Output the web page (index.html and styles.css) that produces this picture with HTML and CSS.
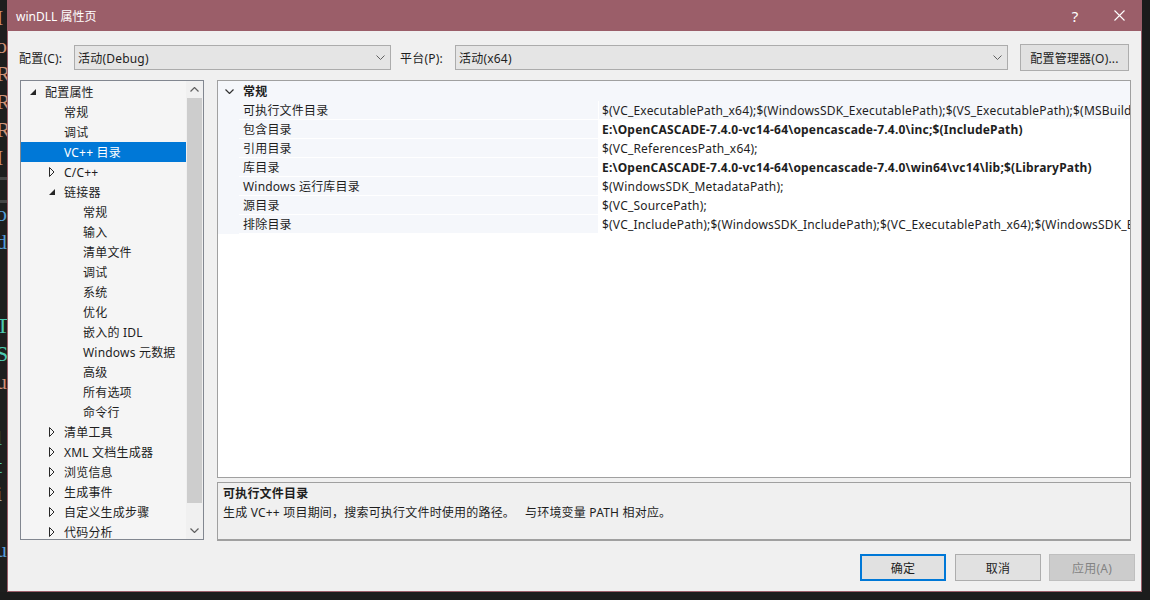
FILE: index.html
```html
<!DOCTYPE html>
<html lang="zh-CN">
<head>
    <meta charset="UTF-8">
    <title>winDLL 属性页</title>
    <link rel="stylesheet" href="styles.css">
</head>
<body>
    <div class="desktop">
        <!-- editor behind the dialog -->
        <div class="editor-strip">
            <div class="ln orange">I</div>
            <div class="ln orange">o</div>
            <div class="ln orange">R</div>
            <div class="ln orange">R</div>
            <div class="ln orange">R</div>
            <div class="ln orange">I</div>
            <div class="ln"></div>
            <div class="ln blue">o</div>
            <div class="ln blue">d</div>
            <div class="ln"></div>
            <div class="ln"></div>
            <div class="ln teal">T</div>
            <div class="ln teal">S</div>
            <div class="ln orange">u</div>
            <div class="ln"></div>
            <div class="ln teal">l</div>
            <div class="ln teal">t</div>
            <div class="ln grey">i</div>
            <div class="ln"></div>
            <div class="ln blue">u</div>
        </div>

        <div class="window">
            <div class="titlebar">
                <span class="title">winDLL 属性页</span>
                <span class="cap-btn help">?</span>
                <span class="cap-btn close">
                    <svg width="11" height="11" viewBox="0 0 11 11"><path d="M0.5 0.5 L10.5 10.5 M10.5 0.5 L0.5 10.5" stroke="#fff" stroke-width="1.1"/></svg>
                </span>
            </div>

            <div class="config-row">
                <span class="lbl">配置(C):</span>
                <div class="combo narrow">
                    <span>活动(Debug)</span>
                    <svg width="9" height="5" viewBox="0 0 9 5"><polyline points="0.5,0.5 4.5,4.5 8.5,0.5" fill="none" stroke="#606060"/></svg>
                </div>
                <span class="lbl platform">平台(P):</span>
                <div class="combo wide">
                    <span>活动(x64)</span>
                    <svg width="9" height="5" viewBox="0 0 9 5"><polyline points="0.5,0.5 4.5,4.5 8.5,0.5" fill="none" stroke="#606060"/></svg>
                </div>
                <button class="btn mgr-btn">配置管理器(O)...</button>
            </div>

            <div class="main">
                <div class="tree">
                    <div class="tree-list">
                        <div class="node lv0"><span class="arrow"><svg width="7" height="7" viewBox="0 0 7 7"><polygon points="6,0 6,6 0,6" fill="#262626"/></svg></span>配置属性</div>
                        <div class="node lv1"><span class="arrow"></span>常规</div>
                        <div class="node lv1"><span class="arrow"></span>调试</div>
                        <div class="node lv1 selected"><span class="arrow"></span>VC++ 目录</div>
                        <div class="node lv1"><span class="arrow"><svg width="6" height="10" viewBox="0 0 6 10"><polygon points="0.5,0.5 5,5 0.5,9.5" fill="none" stroke="#262626"/></svg></span>C/C++</div>
                        <div class="node lv1"><span class="arrow"><svg width="7" height="7" viewBox="0 0 7 7"><polygon points="6,0 6,6 0,6" fill="#262626"/></svg></span>链接器</div>
                        <div class="node lv2"><span class="arrow"></span>常规</div>
                        <div class="node lv2"><span class="arrow"></span>输入</div>
                        <div class="node lv2"><span class="arrow"></span>清单文件</div>
                        <div class="node lv2"><span class="arrow"></span>调试</div>
                        <div class="node lv2"><span class="arrow"></span>系统</div>
                        <div class="node lv2"><span class="arrow"></span>优化</div>
                        <div class="node lv2"><span class="arrow"></span>嵌入的 IDL</div>
                        <div class="node lv2"><span class="arrow"></span>Windows 元数据</div>
                        <div class="node lv2"><span class="arrow"></span>高级</div>
                        <div class="node lv2"><span class="arrow"></span>所有选项</div>
                        <div class="node lv2"><span class="arrow"></span>命令行</div>
                        <div class="node lv1"><span class="arrow"><svg width="6" height="10" viewBox="0 0 6 10"><polygon points="0.5,0.5 5,5 0.5,9.5" fill="none" stroke="#262626"/></svg></span>清单工具</div>
                        <div class="node lv1"><span class="arrow"><svg width="6" height="10" viewBox="0 0 6 10"><polygon points="0.5,0.5 5,5 0.5,9.5" fill="none" stroke="#262626"/></svg></span>XML 文档生成器</div>
                        <div class="node lv1"><span class="arrow"><svg width="6" height="10" viewBox="0 0 6 10"><polygon points="0.5,0.5 5,5 0.5,9.5" fill="none" stroke="#262626"/></svg></span>浏览信息</div>
                        <div class="node lv1"><span class="arrow"><svg width="6" height="10" viewBox="0 0 6 10"><polygon points="0.5,0.5 5,5 0.5,9.5" fill="none" stroke="#262626"/></svg></span>生成事件</div>
                        <div class="node lv1"><span class="arrow"><svg width="6" height="10" viewBox="0 0 6 10"><polygon points="0.5,0.5 5,5 0.5,9.5" fill="none" stroke="#262626"/></svg></span>自定义生成步骤</div>
                        <div class="node lv1"><span class="arrow"><svg width="6" height="10" viewBox="0 0 6 10"><polygon points="0.5,0.5 5,5 0.5,9.5" fill="none" stroke="#262626"/></svg></span>代码分析</div>
                    </div>
                    <div class="vscroll">
                        <div class="sc-arrow"><svg width="9" height="5" viewBox="0 0 9 5"><polyline points="0.5,4.5 4.5,0.5 8.5,4.5" fill="none" stroke="#606060" stroke-width="1.2"/></svg></div>
                        <div class="sc-track"><div class="sc-thumb"></div></div>
                        <div class="sc-arrow"><svg width="9" height="5" viewBox="0 0 9 5"><polyline points="0.5,0.5 4.5,4.5 8.5,0.5" fill="none" stroke="#606060" stroke-width="1.2"/></svg></div>
                    </div>
                </div>

                <div class="right">
                    <div class="grid">
                        <div class="cat-row">
                            <span class="gutter"><svg width="9" height="5" viewBox="0 0 9 5"><polyline points="0.5,0.5 4.5,4.5 8.5,0.5" fill="none" stroke="#333" stroke-width="1.2"/></svg></span>
                            <span class="cat-name">常规</span>
                        </div>
                        <div class="prop-row current">
                            <span class="gutter"></span>
                            <span class="name">可执行文件目录</span>
                            <span class="value">$(VC_ExecutablePath_x64);$(WindowsSDK_ExecutablePath);$(VS_ExecutablePath);$(MSBuild_ExecutablePath);$(FxCopDir);$(PATH);</span>
                        </div>
                        <div class="prop-row">
                            <span class="gutter"></span>
                            <span class="name">包含目录</span>
                            <span class="value bold">E:\OpenCASCADE-7.4.0-vc14-64\opencascade-7.4.0\inc;$(IncludePath)</span>
                        </div>
                        <div class="prop-row">
                            <span class="gutter"></span>
                            <span class="name">引用目录</span>
                            <span class="value">$(VC_ReferencesPath_x64);</span>
                        </div>
                        <div class="prop-row">
                            <span class="gutter"></span>
                            <span class="name">库目录</span>
                            <span class="value bold">E:\OpenCASCADE-7.4.0-vc14-64\opencascade-7.4.0\win64\vc14\lib;$(LibraryPath)</span>
                        </div>
                        <div class="prop-row">
                            <span class="gutter"></span>
                            <span class="name">Windows 运行库目录</span>
                            <span class="value">$(WindowsSDK_MetadataPath);</span>
                        </div>
                        <div class="prop-row">
                            <span class="gutter"></span>
                            <span class="name">源目录</span>
                            <span class="value">$(VC_SourcePath);</span>
                        </div>
                        <div class="prop-row">
                            <span class="gutter"></span>
                            <span class="name">排除目录</span>
                            <span class="value">$(VC_IncludePath);$(WindowsSDK_IncludePath);$(VC_ExecutablePath_x64);$(WindowsSDK_ExecutablePath);$(VS_ExecutablePath);</span>
                        </div>
                    </div>
                    <div class="desc">
                        <div class="desc-title">可执行文件目录</div>
                        <div class="desc-text">生成 VC++ 项目期间，搜索可执行文件时使用的路径。&nbsp;&nbsp; 与环境变量 PATH 相对应。</div>
                    </div>
                </div>
            </div>

            <div class="buttons">
                <button class="btn default">确定</button>
                <button class="btn">取消</button>
                <button class="btn disabled">应用(A)</button>
            </div>
        </div>
    </div>
</body>
</html>
```

FILE: styles.css
```css
* {
    box-sizing: border-box;
}
body {
    margin: 0;
    width: 1150px;
    height: 600px;
    overflow: hidden;
    background: #1c1c1c;
    font-family: "Noto Sans", "Noto Sans CJK SC", sans-serif;
    font-size: 12px;
    letter-spacing: 0.2px;
    color: #1e1e1e;
}
.desktop {
    display: flex;
    height: 592px;
}

/* editor window peeking out on the left */
.editor-strip {
    width: 7px;
    overflow: hidden;
    padding-top: 4px;
    font-family: "Liberation Serif", serif;
    font-size: 22px;
    letter-spacing: 0;
    background:
        linear-gradient(to bottom,
            transparent 177px, #454545 177px, #454545 180px, transparent 180px,
            transparent 200px, #454545 200px, #454545 203px, transparent 203px),
        #1e1e1e;
}
.editor-strip .ln {
    height: 28px;
    line-height: 28px;
    margin-left: -4px;
}
.orange { color: #ce9178; }
.blue { color: #569cd6; }
.teal { color: #4ec9b0; }
.grey { color: #c8c8c8; }

/* dialog window */
.window {
    width: 1135px;
    height: 592px;
    border: 1px solid #9b5e69;
    border-top: 0;
    background: #f0f0f0;
    display: flex;
    flex-direction: column;
}
.titlebar {
    height: 31px;
    flex-shrink: 0;
    background: #9b5e69;
    color: #fff;
    display: flex;
    align-items: center;
    padding-left: 8px;
    letter-spacing: 0;
}
.title {
    flex: 1;
}
.cap-btn {
    height: 31px;
    display: flex;
    align-items: center;
    justify-content: center;
}
.help {
    width: 46px;
    font-size: 15px;
}
.close {
    width: 43px;
}

/* configuration / platform row */
.config-row {
    display: flex;
    align-items: center;
    height: 27px;
    margin-top: 13px;
    padding-left: 11px;
}
.lbl {
    width: 55px;
}
.lbl.platform {
    margin-left: 9px;
}
.combo {
    height: 25px;
    background: #e5e5e5;
    border: 1px solid #acacac;
    display: flex;
    align-items: center;
    justify-content: space-between;
    padding: 0 5px 0 3px;
}
.combo.narrow {
    width: 317px;
}
.combo.wide {
    width: 553px;
}
.btn {
    width: 86px;
    height: 27px;
    background: #e1e1e1;
    border: 1px solid #adadad;
    font-family: inherit;
    font-size: 12px;
    letter-spacing: inherit;
    color: #1e1e1e;
    padding: 0;
}
.mgr-btn {
    width: 109px;
    margin-left: 12px;
}

/* tree + property grid */
.main {
    display: flex;
    gap: 13px;
    height: 461px;
    margin-top: 9px;
    padding-left: 12px;
}
.tree {
    width: 184px;
    height: 460px;
    border: 1px solid #828790;
    background: #f5f5f5;
    display: flex;
}
.tree-list {
    flex: 1;
    overflow: hidden;
    padding-top: 1px;
}
.node {
    height: 20px;
    line-height: 21px;
    display: flex;
    align-items: center;
    white-space: nowrap;
}
.node.lv0 { padding-left: 9px; }
.node.lv1 { padding-left: 28px; }
.node.lv2 { padding-left: 47px; }
.node .arrow {
    width: 15px;
    flex-shrink: 0;
    display: flex;
    align-items: center;
}
.node.selected {
    background: #0078d7;
    color: #fff;
}
.vscroll {
    width: 17px;
    background: #f0f0f0;
    display: flex;
    flex-direction: column;
}
.sc-arrow {
    height: 17px;
    display: flex;
    align-items: center;
    justify-content: center;
}
.sc-track {
    flex: 1;
    padding: 0 1px;
}
.sc-thumb {
    height: 405px;
    background: #cdcdcd;
}

.right {
    width: 914px;
    display: flex;
    flex-direction: column;
    gap: 4px;
}
.grid {
    height: 398px;
    border: 1px solid #a0a0a0;
    background: #fff;
    overflow: hidden;
}
.cat-row, .prop-row {
    display: flex;
    height: 19px;
    white-space: nowrap;
}
.cat-row {
    height: 20px;
    line-height: 21px;
}
.gutter {
    width: 21px;
    flex-shrink: 0;
    background: #f5f7fb;
    display: flex;
    align-items: center;
    justify-content: center;
    padding-left: 2px;
}
.cat-name {
    flex: 1;
    background: #f5f7fb;
    padding-left: 4px;
    font-weight: bold;
}
.prop-row .name, .prop-row .value {
    line-height: 20px;
    border-bottom: 1px solid #fff;
}
.prop-row .name {
    width: 359px;
    flex-shrink: 0;
    background: #f5f7fb;
    padding-left: 4px;
}
.prop-row .value {
    flex: 1;
    overflow: hidden;
    border-left: 1px solid #fff;
    padding-left: 3px;
}
.prop-row.current .value {
    background: #f5f7fb;
}
.value.bold {
    font-weight: bold;
}

.desc {
    height: 59px;
    border: 1px solid #a0a0a0;
    border-bottom-width: 2px;
    padding: 1px 5px;
    line-height: 19px;
}
.desc-title {
    font-weight: bold;
}

/* OK / Cancel / Apply */
.buttons {
    display: flex;
    justify-content: flex-end;
    gap: 8px;
    margin-top: 13px;
    padding-right: 6px;
}
.btn.default {
    border: 2px solid #0078d7;
    margin-right: 1px;
}
.btn.disabled {
    background: #cccccc;
    border-color: #bfbfbf;
    color: #838383;
}
```
